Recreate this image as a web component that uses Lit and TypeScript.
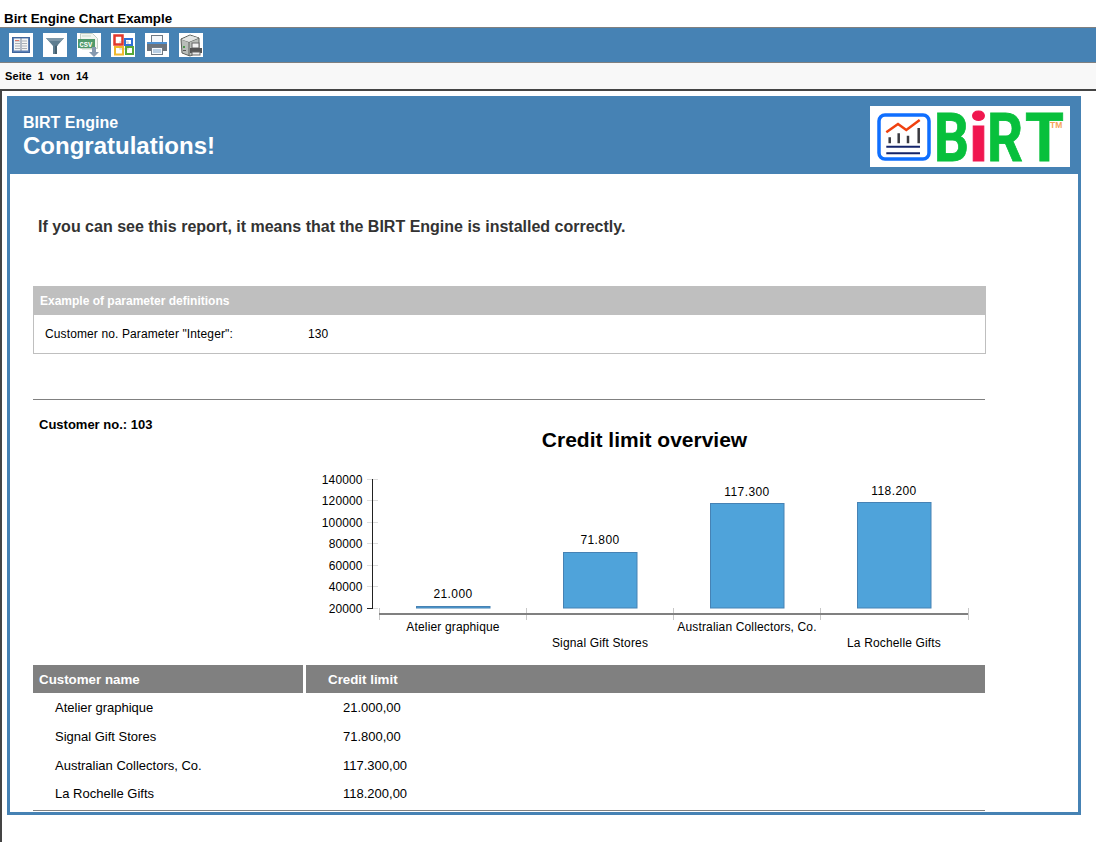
import { LitElement, html, css, svg } from "lit";
import { customElement } from "lit/decorators.js";

const rows = [
  ["Atelier graphique", "21.000,00"],
  ["Signal Gift Stores", "71.800,00"],
  ["Australian Collectors, Co.", "117.300,00"],
  ["La Rochelle Gifts", "118.200,00"],
];

const bars = [
  { x: 116, y: 206, h: 2, label: "21.000", ly: 193, cat: "Atelier graphique", cy: 226 },
  { x: 263, y: 152, h: 56, label: "71.800", ly: 139, cat: "Signal Gift Stores", cy: 242 },
  { x: 410, y: 103, h: 105, label: "117.300", ly: 91, cat: "Australian Collectors, Co.", cy: 226 },
  { x: 557, y: 102, h: 106, label: "118.200", ly: 90, cat: "La Rochelle Gifts", cy: 242 },
];

const yTicks = [
  ["140000", 79], ["120000", 100], ["100000", 122], ["80000", 143],
  ["60000", 165], ["40000", 186], ["20000", 208],
] as const;

const chart = svg`
  <text class="title" x="344.5" y="47" text-anchor="middle">Credit limit overview</text>
  ${yTicks.map(([t, y]) => svg`
    <line x1="67" x2="78" y1=${y + 0.5} y2=${y + 0.5} stroke="#dcdcdc"></line>
    <text class="lbl yl" x="62.5" y=${y + 5} text-anchor="end">${t}</text>`)}
  <line x1="67" x2="72" y1="208.5" y2="208.5" stroke="#222"></line>
  <line x1="72.5" x2="72.5" y1="79" y2="209" stroke="#222"></line>
  ${[79, 226, 373, 520, 668].map((x) => svg`
    <line x1=${x + 0.5} x2=${x + 0.5} y1="208" y2="220" stroke="#c8c8c8"></line>`)}
  <rect x="79" y="213" width="589" height="2" fill="#808080"></rect>
  ${bars.map((b) => svg`
    <rect x=${b.x + 0.5} y=${b.y + 0.5} width="73.500" height=${b.h - 0.5} fill="#4fa3da" stroke="#4682b4"></rect>
    <text class="lbl val" x=${b.x + 37} y=${b.ly + 4.5} text-anchor="middle">${b.label}</text>
    <text class="lbl cat" x=${b.x + 37} y=${b.cy + 4.5} text-anchor="middle">${b.cat}</text>`)}
`;

const icons = [
  html`<svg viewBox="0 0 24 24">
    <rect x="3.500" y="4.500" width="17" height="15" fill="#5b7fb5" stroke="#3f659c"></rect>
    <rect x="5" y="5.500" width="14" height="12" fill="#f4f4f4"></rect>
    <line x1="12" x2="12" y1="5" y2="18" stroke="#6f7f95"></line>
    <path d="M6 8h5M6 10.500h5M6 13h5M6 15.500h5M13 8h5M13 10.500h5M13 13h5M13 15.500h5" stroke="#a9aeb6"></path>
    <path d="M6 7.500h4" stroke="#d9776a"></path>
  </svg>`,
  html`<svg viewBox="0 0 24 24">
    <path d="M3 5h18l-7 8v8h-4v-8z" fill="#5f7d8f"></path>
    <path d="M3 5h18l-3 3H6z" fill="#7f98a8"></path>
    <path d="M12 13v8h2v-8l1-1z" fill="#45606f"></path>
  </svg>`,
  html`<svg viewBox="0 0 24 24">
    <path d="M3.500 .5h12l5 5v10h-17z" fill="#f2f6f0" stroke="#c4cfc4"></path>
    <path d="M5 3h9M5 16h12" stroke="#c9d9c9"></path>
    <rect x="1" y="6" width="17" height="9" fill="#4f9a6b"></rect>
    <text class="csv" x="2.500" y="13.500">CSV</text>
    <path d="M15 14h4v5h3l-5 5-5-5h3z" fill="#8599b0"></path>
  </svg>`,
  html`<svg viewBox="0 0 24 24">
    <path d="M9 9h8v7H9z" fill="none" stroke="#d8d8d8" stroke-width="1.500"></path>
    <rect x="3.500" y="2.500" width="8" height="9" fill="none" stroke="#e2382c" stroke-width="2.500"></rect>
    <rect x="14" y="6" width="7" height="6" fill="none" stroke="#2f6fd6" stroke-width="2"></rect>
    <rect x="4" y="14" width="8" height="7.500" fill="none" stroke="#f0b92c" stroke-width="2"></rect>
    <rect x="15" y="14" width="7" height="7" fill="none" stroke="#57a839" stroke-width="2"></rect>
  </svg>`,
  html`<svg viewBox="0 0 24 24">
    <rect x="6.500" y="2.500" width="11" height="7" fill="#f4f7fa" stroke="#6f7a85"></rect>
    <path d="M2 9h20v9H2z" fill="#6c737b"></path>
    <path d="M2 9h20v2H2z" fill="#4d8fd0"></path>
    <rect x="6.500" y="14.500" width="11" height="7" fill="#f6f8fa" stroke="#6f7a85"></rect>
    <path d="M8 17h8M8 19h8" stroke="#7aa4cc"></path>
  </svg>`,
  html`<svg viewBox="0 0 24 24">
    <path d="M2 6l9-4 9 3v14l-9 4-8-3z" fill="#b9bdb9" stroke="#5c605c"></path>
    <path d="M2 6l8 3 10-4M10 9v14" fill="none" stroke="#5c605c"></path>
    <path d="M2.500 6.500l7.500 2.500 9.500-4-8.500-2.500z" fill="#e4e6e4"></path>
    <rect x="4" y="13" width="2" height="2" fill="#4b9a4b"></rect>
    <rect x="4" y="17" width="3" height="1" fill="#555"></rect>
    <rect x="13" y="10" width="7" height="5" fill="#f2f2f2" stroke="#666"></rect>
    <path d="M11 15h12v5H11z" fill="#555"></path>
    <rect x="13" y="19" width="8" height="3" fill="#eee" stroke="#666"></rect>
  </svg>`,
];

const logo = html`<svg class="logo" viewBox="0 0 200 61" width="200" height="61">
  <rect x="9" y="9" width="50" height="44" rx="6" fill="#fff" stroke="#0f6fff" stroke-width="3.500"></rect>
  <path d="M16.300 26.300L28 18l8.300 6 13.400-10" fill="none" stroke="#f0410f" stroke-width="2.500"></path>
  <path d="M19.700 31.300v6M28.700 27.300v10M38 29.700v7.600M48.700 22v15.300" stroke="#3a3a40" stroke-width="2.500"></path>
  <path d="M16.300 40.700H50M16.300 47.300H50" stroke="#14246b" stroke-width="2"></path>
  <text class="lg g" x="64" y="55" textLength="35" lengthAdjust="spacingAndGlyphs">B</text>
  <text class="lg r" x="98.500" y="55" textLength="20" lengthAdjust="spacingAndGlyphs">i</text>
  <text class="lg g" x="117" y="55" textLength="36" lengthAdjust="spacingAndGlyphs">R</text>
  <text class="lg g" x="155" y="55" textLength="39" lengthAdjust="spacingAndGlyphs">T</text>
  <text class="tm" x="180" y="22">TM</text>
</svg>`;

@customElement("app-root")
export class AppRoot extends LitElement {
  static styles = css`
    :host {
      display: flex;
      flex-direction: column;
      height: 842px;
      overflow: hidden;
      background: #fff;
      color: #000;
      font-family: "Liberation Sans", Arial, sans-serif;
      font-size: 12px;
    }
    .apptitle {
      height: 27px;
      box-sizing: border-box;
      padding: 11px 0 0 4px;
      font-size: 13.330px;
      line-height: 15px;
      font-weight: bold;
    }
    .toolbar {
      height: 35px;
      box-sizing: border-box;
      border-top: 1px solid #808080;
      background: #4682b4;
      display: flex;
      gap: 10px;
      padding: 5px 0 0 9px;
    }
    .tool {
      width: 24px;
      height: 24px;
      background: #fff;
    }
    .tool svg {
      display: block;
      width: 24px;
      height: 24px;
    }
    .pager {
      height: 27px;
      box-sizing: border-box;
      border-top: 1px solid #808080;
      background: #f8f8f8;
      display: flex;
      gap: 6px;
      align-items: center;
      padding-left: 5px;
      font-size: 11px;
      font-weight: bold;
      letter-spacing: 0.1px;
    }
    .main {
      flex: 1;
      box-sizing: border-box;
      border-top: 2px solid #444;
      border-left: 2px solid #444;
      padding: 5px 0 0 5px;
    }
    .report {
      width: 1074px;
      box-sizing: border-box;
      border: 3px solid #4682b4;
    }
    .head {
      height: 75px;
      background: #4682b4;
      color: #fff;
      font-weight: bold;
      display: flex;
      justify-content: space-between;
      padding: 7px 8px 0 13px;
      box-sizing: border-box;
    }
    .head1 {
      font-size: 16px;
      line-height: 18px;
      margin-top: 8px;
    }
    .head2 {
      font-size: 24px;
      line-height: 28px;
    }
    .logo {
      display: block;
      background: #fff;
    }
    .lg {
      font-size: 66px;
      font-weight: bold;
      font-family: Roboto, "Liberation Sans", sans-serif;
      stroke-width: 0.8px;
    }
    .g { fill: #08c03c; stroke: #08c03c; }
    .r { fill: #f0174f; stroke: #f0174f; }
    .tm { font-size: 8.500px; fill: #f5a55a; }
    .csv {
      font-family: "Liberation Mono", monospace;
      font-size: 7px;
      font-weight: bold;
      fill: #fff;
    }
    .body {
      padding: 43px 0 0 23px;
    }
    .intro {
      padding-left: 5px;
      font-size: 16px;
      line-height: 20px;
      font-weight: bold;
      color: #333;
    }
    .params {
      margin-top: 49px;
      width: 953px;
    }
    .params-h {
      height: 29px;
      background: #bfbfbf;
      color: #fff;
      font-weight: bold;
      line-height: 30px;
      padding-left: 7px;
    }
    .params-b {
      height: 39px;
      box-sizing: border-box;
      border: 1px solid #bfbfbf;
      border-top: 0;
      display: flex;
      align-items: center;
      padding-left: 11px;
      letter-spacing: 0.12px;
    }
    .params-l {
      width: 263px;
    }
    .rule {
      height: 1px;
      width: 952px;
      background: #808080;
    }
    .r1 { margin-top: 45px; }
    .r2 { margin-top: 2px; }
    .split {
      display: flex;
      height: 265px;
    }
    .cust {
      width: 261px;
      padding: 18px 0 0 6px;
      font-size: 13px;
      font-weight: bold;
      line-height: 14px;
    }
    .chart {
      display: block;
    }
    .title {
      font-size: 21px;
      font-weight: bold;
    }
    .lbl {
      font-size: 12px;
    }
    .yl {
      letter-spacing: 0.1px;
    }
    .val {
      letter-spacing: 0.4px;
    }
    .cat {
      letter-spacing: 0.15px;
    }
    .grid {
      width: 952px;
      display: grid;
      grid-template-columns: 270px 1fr;
      column-gap: 3px;
    }
    .th {
      height: 28px;
      background: #808080;
      color: #fff;
      font-size: 13.330px;
      font-weight: bold;
      line-height: 29px;
      padding-left: 6px;
    }
    .th.c2 { padding-left: 22px; }
    .td {
      height: 29px;
      font-size: 13px;
      line-height: 29px;
      padding-left: 22px;
    }
    .td.c2 { padding-left: 37px; }
    .td.last { height: 28px; line-height: 27px; }
    .bottom { height: 1px; }
  `;

  render() {
    return html`
      <div class="apptitle">Birt Engine Chart Example</div>
      <div class="toolbar">${icons.map((i) => html`<div class="tool">${i}</div>`)}</div>
      <div class="pager"><span>Seite</span><span>1</span><span>von</span><span>14</span></div>
      <div class="main">
        <div class="report">
          <div class="head">
            <div>
              <div class="head1">BIRT Engine</div>
              <div class="head2">Congratulations!</div>
            </div>
            ${logo}
          </div>
          <div class="body">
            <div class="intro">If you can see this report, it means that the BIRT Engine is installed correctly.</div>
            <div class="params">
              <div class="params-h">Example of parameter definitions</div>
              <div class="params-b"><span class="params-l">Customer no. Parameter "Integer":</span><span>130</span></div>
            </div>
            <div class="rule r1"></div>
            <div class="split">
              <div class="cust">Customer no.: 103</div>
              <svg class="chart" width="685" height="265" viewBox="0 0 685 265">${chart}</svg>
            </div>
            <div class="grid">
              <div class="th">Customer name</div>
              <div class="th c2">Credit limit</div>
              ${rows.map(
                ([n, v], i) => html`
                  <div class="td ${i === 3 ? "last" : ""}">${n}</div>
                  <div class="td c2 ${i === 3 ? "last" : ""}">${v}</div>
                `
              )}
            </div>
            <div class="rule r2"></div>
            <div class="bottom"></div>
          </div>
        </div>
      </div>
    `;
  }
}
